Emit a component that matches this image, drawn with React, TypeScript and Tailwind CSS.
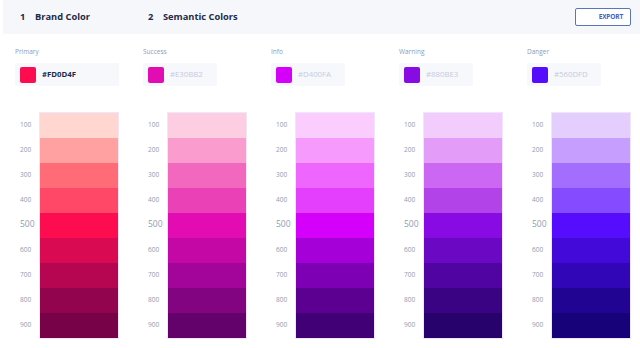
import React from "react";

const palettes = [
  {
    name: "Primary",
    hex: "#FD0D4F",
    main: true,
    shades: ["#FFD6D0", "#FFA1A0", "#FF6C77", "#FF4768", "#FD0D4F", "#D90952", "#B60652", "#92044D", "#780248"],
  },
  {
    name: "Success",
    hex: "#E30BB2",
    shades: ["#FDCDE2", "#FB9CCF", "#F268BE", "#EA42B6", "#E30BB2", "#C308A5", "#A3059A", "#830480", "#63026A"],
  },
  {
    name: "Info",
    hex: "#D400FA",
    shades: ["#FBCCFE", "#F69AFE", "#EE66FD", "#E43FFC", "#D400FA", "#A400D7", "#7D00B4", "#5B0091", "#420077"],
  },
  {
    name: "Warning",
    hex: "#880BE3",
    shades: ["#F2CCFD", "#E49CF9", "#CB67F3", "#B243E8", "#880BE3", "#6A08C3", "#5005A3", "#390383", "#28026C"],
  },
  {
    name: "Danger",
    hex: "#560DFD",
    shades: ["#E4CEFE", "#C59EFE", "#A36EFE", "#854BFE", "#560DFD", "#4209D9", "#3106B6", "#220492", "#170279"],
  },
];

const steps = ["100", "200", "300", "400", "500", "600", "700", "800", "900"];

const App = () => {
  return (
    <div
      className="w-[640px] h-[348px] bg-white overflow-hidden"
      style={{ fontFamily: '"Open Sans", "Noto Sans", sans-serif' }}
    >
      <div className="ml-[3px] h-[34px] bg-[#f6f7fa] flex items-center pl-[17px] pr-[9px]">
        <div className="w-[128px] flex items-center text-[9.3px] font-bold text-[#222b45]">
          <span className="w-[15px]">1</span>
          <span>Brand Color</span>
        </div>
        <div className="flex-1 flex items-center text-[9.3px] font-bold text-[#222b45]">
          <span className="w-[15px]">2</span>
          <span>Semantic Colors</span>
        </div>
        <button className="w-[56px] h-[18px] border border-[#5b75b8] rounded-[2px] bg-white flex items-center justify-end pr-[7px] text-[6.5px] font-bold text-[#3f63c4] tracking-tight">
          EXPORT
        </button>
      </div>

      <div className="flex gap-[24px] pl-[15px] pt-[13px]">
        {palettes.map((p) => (
          <div key={p.name} className="w-[104px] flex flex-col">
            <div className="h-[9px] leading-[9px] text-[6.5px] text-[#8f9bb3]">{p.name}</div>
            <div
              className={`mt-[7px] h-[23px] bg-[#f7f8fb] flex items-center pl-[5px] gap-[6px] ${p.main ? "w-[104px]" : "w-[74px]"}`}
            >
              <div className="w-[16px] h-[16px] rounded-[2px]" style={{ backgroundColor: p.hex }} />
              <span
                className={`text-[7.8px] ${p.main ? "font-bold text-[#222b45]" : "text-[#c5cbe0]"}`}
              >
                {p.hex}
              </span>
            </div>
            <div className="mt-[26px] flex">
              <div className="w-[24px] flex flex-col">
                {steps.map((s) => (
                  <div
                    key={s}
                    className={`h-[25px] flex items-center pl-[5px] text-[#8f9bb3] ${s === "500" ? "text-[8.5px] pl-[4px]" : "text-[6.5px]"}`}
                  >
                    {s}
                  </div>
                ))}
              </div>
              <div className="w-[80px] flex flex-col border border-[#f0e6fb]">
                {p.shades.map((c, i) => (
                  <div key={i} className="h-[25px]" style={{ backgroundColor: c }} />
                ))}
              </div>
            </div>
          </div>
        ))}
      </div>
    </div>
  );
};

export default App;
